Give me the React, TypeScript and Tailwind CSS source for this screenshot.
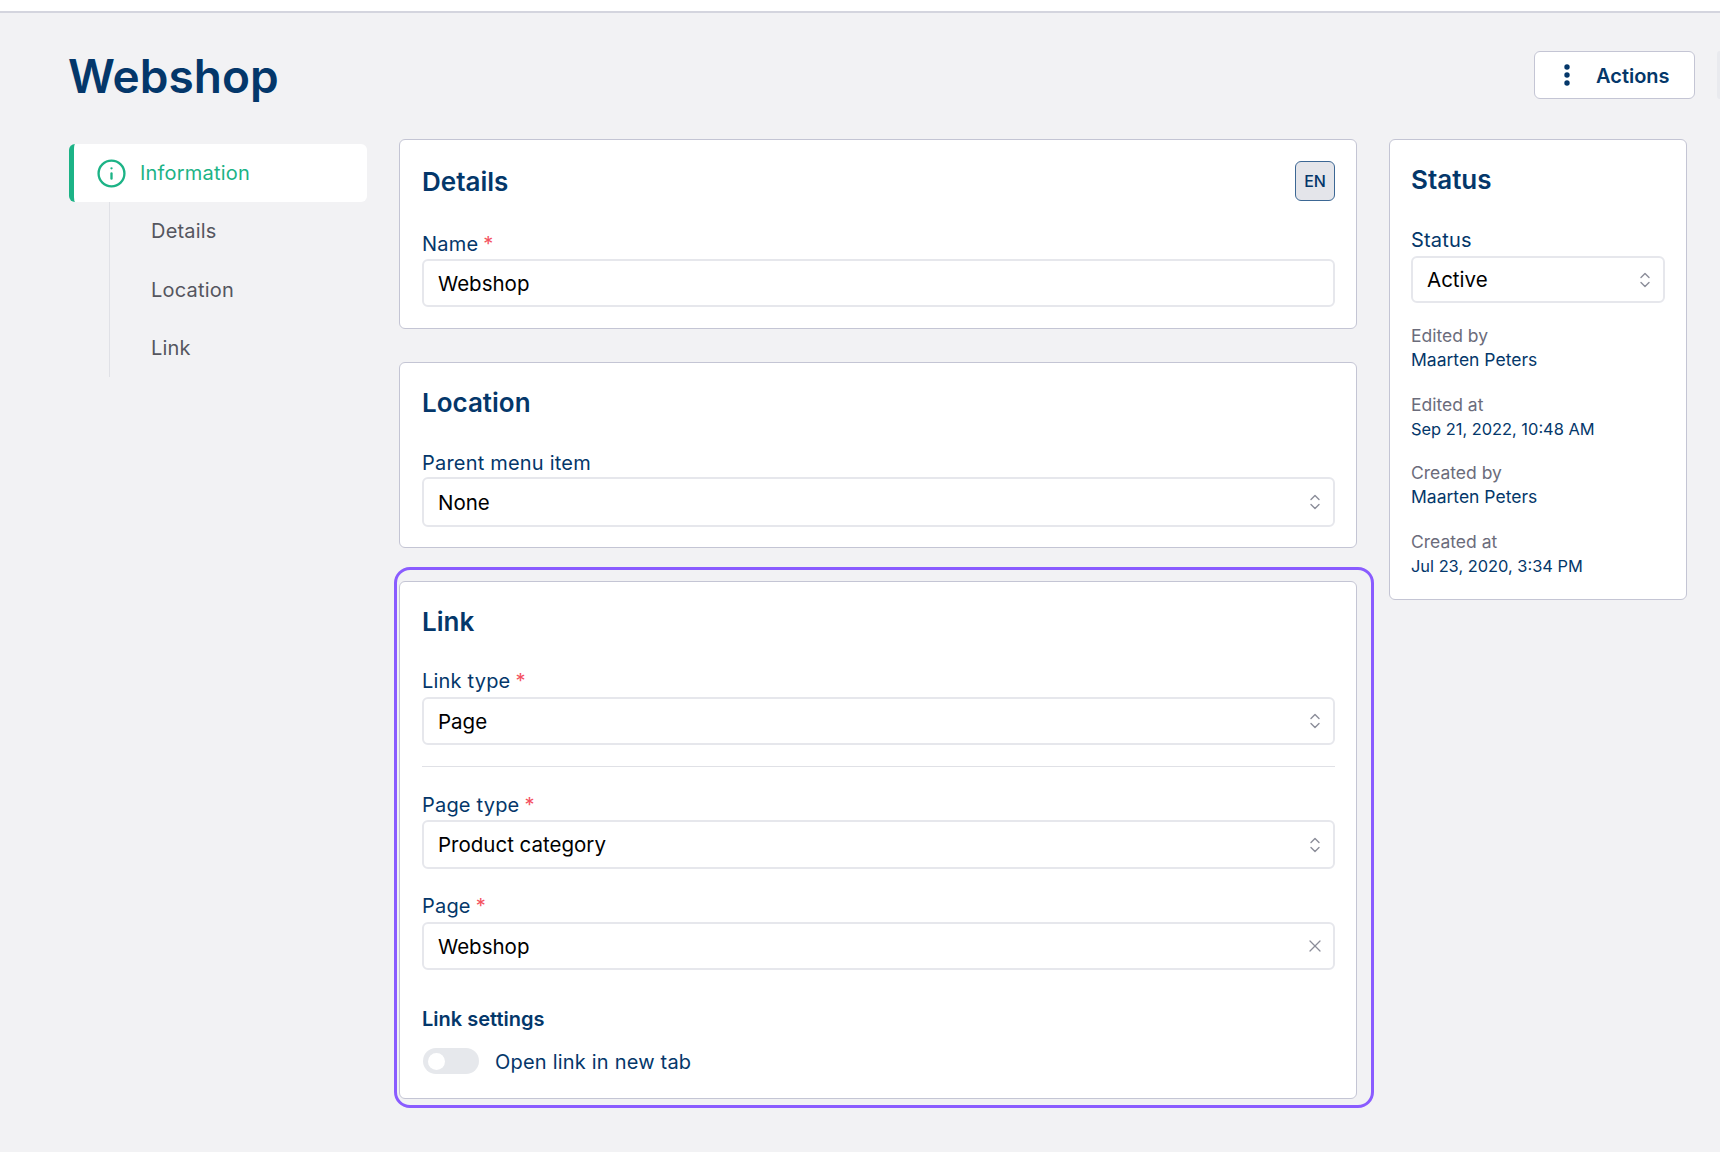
import React from "react";
import { Info, X } from "lucide-react";

function UpDown() {
  return (
    <svg width="12" height="16" viewBox="0 0 12 16" fill="none" stroke="#8b8d99" strokeWidth="1.4" strokeLinecap="round" strokeLinejoin="round">
      <path d="M2 5.5 6 1.5l4 4" />
      <path d="M2 10.5l4 4 4-4" />
    </svg>
  );
}

function Label({ text, required }: { text: string; required?: boolean }) {
  return (
    <div className="h-6 text-[20px] leading-6 tracking-[0.01em] text-[#04376a]">
      {text}
      {required && <span className="ml-[5px] text-[#f4525f]">*</span>}
    </div>
  );
}

function Field({ value, icon, className }: { value: string; icon?: React.ReactNode; className: string }) {
  return (
    <div className={`flex items-center justify-between rounded-md border-2 border-[#e6e7ec] bg-white pl-[14px] pr-[12px] text-[20.5px] text-black ${className}`}>
      <span className="translate-y-[1px]">{value}</span>
      {icon}
    </div>
  );
}

function Heading({ text }: { text: string }) {
  return <h2 className="translate-y-px text-[26px] font-semibold leading-10 text-[#04376a]">{text}</h2>;
}

function Meta({ label, value, valueSize }: { label: string; value: string; valueSize: string }) {
  return (
    <div>
      <div className="text-[17.5px] leading-6 text-[#6b6c7b]">{label}</div>
      <div className={`leading-6 text-[#04376a] ${valueSize}`}>{value}</div>
    </div>
  );
}

export default function App() {
  return (
    <div className="relative h-[1152px] w-[1720px] overflow-hidden bg-[#f2f2f4] font-['Inter',sans-serif]">
      <div className="h-[13px] border-b-2 border-[#d4d5de] bg-white" />

      <div className="mt-[38px] flex h-[48px] items-center justify-between pl-[68px] pr-[25px]">
        <h1 className="translate-y-px text-[46px] font-semibold text-[#04376a]">Webshop</h1>
        <button className="flex h-12 w-[161px] items-center rounded-md border border-[#c4c5d4] bg-white pl-[29px] text-[20px] font-semibold text-[#04376a]">
          <svg width="6" height="22" viewBox="0 0 6 22" fill="#04376a">
            <circle cx="3" cy="3" r="2.7" />
            <circle cx="3" cy="11" r="2.7" />
            <circle cx="3" cy="19" r="2.7" />
          </svg>
          <span className="ml-[26px] translate-y-px">Actions</span>
        </button>
      </div>
      {/* clipped neighbour button at the right edge */}
      <div className="absolute right-0 top-[51px] h-12 w-[3px] rounded-l-md bg-[#e9eaee]" />

      <div className="mt-10 flex items-start pl-[69px]">
        <nav className="mt-[5px] w-[298px] shrink-0 text-[20px] tracking-[0.01em]">
          <div className="flex h-[58px] items-center rounded-md border-l-[5px] border-[#1cb386] bg-white pl-[22px] text-[#1cb386]">
            <Info size={31} strokeWidth={1.8} />
            <span className="ml-[13px]">Information</span>
          </div>
          <div className="ml-[40px] border-l border-[#e0e1e6] pl-[41px] text-[#55565f]">
            <div className="flex h-[58.5px] items-center">Details</div>
            <div className="flex h-[58.5px] items-center">Location</div>
            <div className="flex h-[58px] items-center">Link</div>
          </div>
        </nav>

        <main className="ml-[32px] w-[958px] shrink-0">
          <section className="rounded-md border border-[#c4c5d4] bg-white py-[21px] pl-[22px] pr-[21px]">
            <div className="flex h-10 items-center justify-between">
              <Heading text="Details" />
              <div className="flex h-10 w-10 items-center justify-center rounded-md border border-[#3c6794] bg-[#e4e5ea] text-[16px] font-medium text-[#04376a]">EN</div>
            </div>
            <div className="mt-[31px]"><Label text="Name" required /></div>
            <Field value="Webshop" className="mt-[3px] h-[48px]" />
          </section>

          <section className="mt-[33px] rounded-md border border-[#c4c5d4] bg-white pb-[20px] pl-[22px] pr-[21px] pt-[19px]">
            <Heading text="Location" />
            <div className="mt-[29px]"><Label text="Parent menu item" /></div>
            <Field value="None" icon={<UpDown />} className="mt-[2px] h-[50px]" />
          </section>

          <div className="-ml-[5px] -mr-[17px] mt-[19px] rounded-2xl border-[3px] border-[#8a5cff] pb-[6px] pl-[2px] pr-[14px] pt-[11px]">
            <section className="rounded-md border border-[#c4c5d4] bg-white pb-[22px] pl-[22px] pr-[21px] pt-[19px]">
              <Heading text="Link" />
              <div className="mt-[28px]"><Label text="Link type" required /></div>
              <Field value="Page" icon={<UpDown />} className="mt-[4px] h-[48px]" />
              <div className="mt-[21px] h-px bg-[#e0e1e6]" />
              <div className="mt-[26px]"><Label text="Page type" required /></div>
              <Field value="Product category" icon={<UpDown />} className="mt-[3px] h-[49px]" />
              <div className="mt-[25px]"><Label text="Page" required /></div>
              <Field value="Webshop" icon={<X size={20} strokeWidth={1.5} className="-mr-[4px] text-[#8b8d99]" />} className="mt-1 h-[48px]" />
              <div className="mt-[37px] h-6 text-[20px] font-semibold leading-6 text-[#04376a]">Link settings</div>
              <div className="mt-[15px] flex items-center">
                <div className="ml-px flex h-[26px] w-[56px] items-center rounded-full bg-[#e6e8ec] pl-[5px]">
                  <div className="h-[17px] w-[17px] rounded-full bg-white" />
                </div>
                <span className="ml-4 translate-y-px text-[20px] tracking-[0.01em] text-[#04376a]">Open link in new tab</span>
              </div>
            </section>
          </div>
        </main>

        <aside className="ml-[32px] w-[298px] shrink-0 rounded-md border border-[#c4c5d4] bg-white px-[21px] pb-[21px] pt-[19px]">
          <Heading text="Status" />
          <div className="mt-[29px]"><Label text="Status" /></div>
          <Field value="Active" icon={<UpDown />} className="mt-[4px] h-[47px]" />
          <div className="mt-[21px] flex flex-col gap-[20.5px]">
            <Meta label="Edited by" value="Maarten Peters" valueSize="text-[17.5px]" />
            <Meta label="Edited at" value="Sep 21, 2022, 10:48 AM" valueSize="text-[16.4px]" />
            <Meta label="Created by" value="Maarten Peters" valueSize="text-[17.5px]" />
            <Meta label="Created at" value="Jul 23, 2020, 3:34 PM" valueSize="text-[16.4px]" />
          </div>
        </aside>
      </div>
    </div>
  );
}
